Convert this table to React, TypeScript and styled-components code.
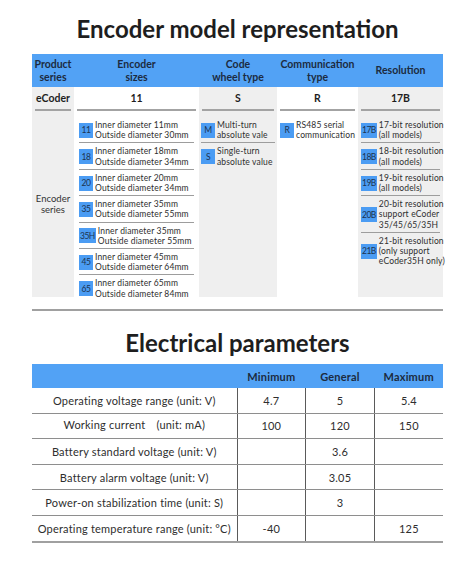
import styled, { createGlobalStyle } from "styled-components";

const GlobalStyle = createGlobalStyle`
  body {
    margin: 0;
    background: #ffffff;
    font-family: "Lato", "Liberation Sans", sans-serif;
    color: #2e2e2e;
  }
`;

type Option = { code: string; lines: string[] };

const sizes: Option[] = [
  { code: "11", lines: ["Inner diameter 11mm", "Outside diameter 30mm"] },
  { code: "18", lines: ["Inner diameter 18mm", "Outside diameter 34mm"] },
  { code: "20", lines: ["Inner diameter 20mm", "Outside diameter 34mm"] },
  { code: "35", lines: ["Inner diameter 35mm", "Outside diameter 55mm"] },
  { code: "35H", lines: ["Inner diameter 35mm", "Outside diameter 55mm"] },
  { code: "45", lines: ["Inner diameter 45mm", "Outside diameter 64mm"] },
  { code: "65", lines: ["Inner diameter 65mm", "Outside diameter 84mm"] },
];

const wheels: Option[] = [
  { code: "M", lines: ["Multi-turn", "absolute vale"] },
  { code: "S", lines: ["Single-turn", "absolute value"] },
];

const comms: Option[] = [{ code: "R", lines: ["RS485 serial", "communication"] }];

const resolutions: Option[] = [
  { code: "17B", lines: ["17-bit resolution", "(all models)"] },
  { code: "18B", lines: ["18-bit resolution", "(all models)"] },
  { code: "19B", lines: ["19-bit resolution", "(all models)"] },
  { code: "20B", lines: ["20-bit resolution", "support eCoder", "35/45/65/35H"] },
  { code: "21B", lines: ["21-bit resolution", "(only support", "eCoder35H only)"] },
];

const params = [
  { name: "Operating voltage range (unit: V)", min: "4.7", gen: "5", max: "5.4" },
  { name: "Working current\u3000(unit: mA)", min: "100", gen: "120", max: "150" },
  { name: "Battery standard voltage (unit: V)", min: "", gen: "3.6", max: "" },
  { name: "Battery alarm voltage (unit: V)", min: "", gen: "3.05", max: "" },
  { name: "Power-on stabilization time (unit: S)", min: "", gen: "3", max: "" },
  { name: "Operating temperature range (unit: \u00b0C)", min: "-40", gen: "", max: "125" },
];

const OptionList = ({ items, inset }: { items: Option[]; inset: number }) => (
  <List $inset={inset}>
    {items.map((item) => (
      <OptionRow key={item.code}>
        <Badge>{item.code}</Badge>
        <OptionText>
          {item.lines.map((l) => (
            <div key={l}>{l}</div>
          ))}
        </OptionText>
      </OptionRow>
    ))}
  </List>
);

export default function App() {
  return (
    <Page>
      <GlobalStyle />
      <Title>Encoder model representation</Title>
      <ModelGrid>
        <HeadCell>Product<br />series</HeadCell>
        <HeadCell>Encoder<br />sizes</HeadCell>
        <HeadCell>Code<br />wheel type</HeadCell>
        <HeadCell>Communication<br />type</HeadCell>
        <HeadCell>Resolution</HeadCell>

        <ValueCell $shaded><ValueText>eCoder</ValueText></ValueCell>
        <ValueCell><ValueText>11</ValueText></ValueCell>
        <ValueCell $shaded><ValueText>S</ValueText></ValueCell>
        <ValueCell><ValueText>R</ValueText></ValueCell>
        <ValueCell $shaded><ValueText>17B</ValueText></ValueCell>

        <SeriesCell $shaded>Encoder<br />series</SeriesCell>
        <BodyCell><OptionList items={sizes} inset={5} /></BodyCell>
        <BodyCell $shaded><OptionList items={wheels} inset={2} /></BodyCell>
        <BodyCell><OptionList items={comms} inset={3} /></BodyCell>
        <BodyCell $shaded><OptionList items={resolutions} inset={3} /></BodyCell>
      </ModelGrid>
      <Divider />
      <SecondTitle>Electrical parameters</SecondTitle>
      <ParamTable>
        <thead>
          <tr>
            <Th />
            <Th>Minimum</Th>
            <Th>General</Th>
            <Th>Maximum</Th>
          </tr>
        </thead>
        <tbody>
          {params.map((p) => (
            <tr key={p.name}>
              <NameTd>{p.name}</NameTd>
              <Td>{p.min}</Td>
              <Td>{p.gen}</Td>
              <Td>{p.max}</Td>
            </tr>
          ))}
        </tbody>
      </ParamTable>
    </Page>
  );
}

const Page = styled.div`
  width: 474px;
  padding: 0 31px 0 32px;
  box-sizing: border-box;
`;

const Title = styled.h1`
  margin: 0;
  padding-top: 14px;
  height: 40px;
  text-align: center;
  font-size: 24px;
  line-height: 30px;
  font-weight: 700;
  color: #1e1e1e;
`;

const SecondTitle = styled(Title)`
  padding-top: 17px;
  height: 36px;
`;

const ModelGrid = styled.div`
  display: grid;
  grid-template-columns: 42px 125px 78px 81px 85px;
  grid-template-rows: 33px 24px auto;
`;

const HeadCell = styled.div`
  background: #52a2f5;
  display: flex;
  align-items: center;
  justify-content: center;
  text-align: center;
  font-size: 10.5px;
  line-height: 12.6px;
  font-weight: 700;
  color: #1c2b40;
`;

const ValueCell = styled.div<{ $shaded?: boolean }>`
  background: ${({ $shaded }) => ($shaded ? "#efefef" : "#ffffff")};
  padding: 0 3px;
  display: flex;
`;

const ValueText = styled.div`
  flex: 1;
  display: flex;
  align-items: center;
  justify-content: center;
  border-bottom: 2px solid #a3a3a3;
  font-size: 10.5px;
  font-weight: 700;
  color: #1e1e1e;
`;

const BodyCell = styled.div<{ $shaded?: boolean }>`
  background: ${({ $shaded }) => ($shaded ? "#efefef" : "#ffffff")};
  padding: 6px 0 0;
  height: 186px;
  box-sizing: border-box;
`;

const SeriesCell = styled(BodyCell)`
  display: flex;
  align-items: center;
  justify-content: center;
  text-align: center;
  font-size: 9.5px;
  line-height: 11.4px;
  color: #333333;
  padding-top: 0;
`;

const List = styled.div<{ $inset: number }>`
  display: flex;
  flex-direction: column;
  margin: 0 ${({ $inset }) => $inset}px;
`;

const OptionRow = styled.div`
  display: flex;
  align-items: center;
  gap: 2px;
  padding: 3px 0 2px;
  border-bottom: 1px solid #9d9d9d;

  &:last-child {
    border-bottom: none;
  }
`;

const Badge = styled.div`
  min-width: 14px;
  height: 15px;
  padding: 0 1px;
  box-sizing: border-box;
  background: #4b9cf3;
  color: #1d3350;
  font-size: 8.5px;
  display: flex;
  align-items: center;
  justify-content: center;
  letter-spacing: -0.5px;
  flex-shrink: 0;
`;

const OptionText = styled.div`
  font-size: 8.5px;
  line-height: 10.2px;
  letter-spacing: 0.15px;
  color: #2e2e2e;
  white-space: nowrap;
`;

const Divider = styled.div`
  margin-top: 12px;
  border-top: 2px solid #a0a0a0;
`;

const ParamTable = styled.table`
  width: 411px;
  border-collapse: collapse;
  table-layout: fixed;
  font-size: 11px;
  letter-spacing: 0.2px;
  color: #2e2e2e;
  border-bottom: 2px solid #a0a0a0;
`;

const Th = styled.th`
  background: #52a2f5;
  height: 24px;
  padding: 0;
  font-size: 11px;
  font-weight: 700;
  color: #1c2b40;
  text-align: center;

  &:first-child {
    width: 205px;
  }
`;

const Td = styled.td`
  height: 24.6px;
  padding: 0;
  text-align: center;
  border-bottom: 1px solid #8e8e8e;
  border-left: 1px solid #5a5a5a;
`;

const NameTd = styled(Td)`
  border-left: none;
`;
